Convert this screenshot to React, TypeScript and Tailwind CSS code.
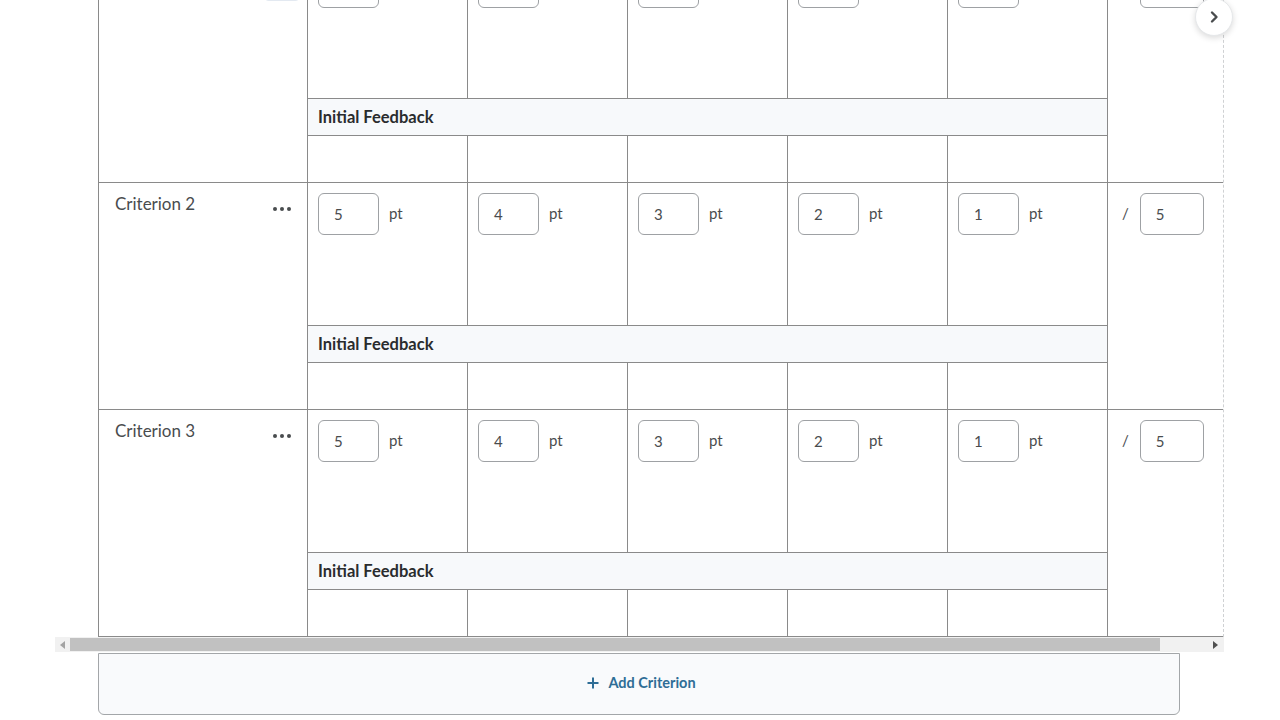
const levels = [5, 4, 3, 2, 1];

const DotsButton = ({ hovered }: { hovered?: boolean }) => (
    <button
        className={`w-[38px] h-[38px] rounded-md flex items-center justify-center gap-[3px] ${
            hovered ? "bg-[#e3e9f1]" : ""
        }`}
    >
        <span className="w-[4px] h-[4px] rounded-full bg-[#494c4e]"></span>
        <span className="w-[4px] h-[4px] rounded-full bg-[#494c4e]"></span>
        <span className="w-[4px] h-[4px] rounded-full bg-[#494c4e]"></span>
    </button>
);

const PointInput = ({ value, wide }: { value: number; wide?: boolean }) => (
    <div
        className={`${
            wide ? "w-[64px]" : "w-[61px]"
        } h-[42px] rounded-[6px] border border-[#9ea1a4] flex items-center pl-[15px] text-[15px] leading-[20px] pb-[1px] text-[#494c4e]`}
    >
        {value}
    </div>
);

const CriterionRow = ({
    name,
    hovered,
}: {
    name: string;
    hovered?: boolean;
}) => {
    return (
        <div className="grid grid-cols-[210px_160px_160px_160px_160px_160px_115px] grid-rows-[143px_37px_47px]">
            <div className="row-span-3 border-l border-r border-b border-[#8a8a8a] flex justify-between items-start pl-[16px] pr-[6px] pt-[7px]">
                <span className="text-[17px] leading-[24px] mt-[2px] text-[#494c4e]">
                    {name}
                </span>
                <DotsButton hovered={hovered} />
            </div>

            {levels.map((lv) => (
                <div
                    key={lv}
                    className="border-r border-b border-[#8a8a8a] pl-[10px] pt-[10px]"
                >
                    <div className="flex items-center gap-[10px]">
                        <PointInput value={lv} />
                        <span className="text-[15px] leading-[20px] pb-[2px] text-[#494c4e]">
                            pt
                        </span>
                    </div>
                </div>
            ))}

            <div className="row-span-3 border-b border-[#8a8a8a] pl-[14px] pt-[10px]">
                <div className="flex items-center gap-[11px]">
                    <span className="text-[15px] leading-[20px] pb-[2px] text-[#494c4e]">
                        /
                    </span>
                    <PointInput value={5} wide />
                </div>
            </div>

            <div className="col-span-5 border-r border-b border-[#8a8a8a] bg-[#f7f9fb] flex items-center pl-[10px]">
                <span className="text-[16.5px] leading-[20px] font-bold text-[#2a2c2e]">
                    Initial Feedback
                </span>
            </div>

            {levels.map((lv) => (
                <div
                    key={"f" + lv}
                    className="border-r border-b border-[#8a8a8a]"
                ></div>
            ))}
        </div>
    );
};

export default function App() {
    return (
        <div className="w-[1280px] h-[720px] bg-white overflow-hidden font-['Lato','Noto_Sans',sans-serif]">
            <div className="ml-[55px] w-[1169px] relative">
                <div className="h-[637px] overflow-hidden pl-[43px] border-r border-dashed border-[#cfd1d3]">
                    <div className="-mt-[44px]">
                        <CriterionRow name="Criterion 1" hovered />
                        <CriterionRow name="Criterion 2" />
                        <CriterionRow name="Criterion 3" />
                    </div>
                </div>

                <button className="absolute left-[1140px] top-[-2px] w-[38px] h-[38px] rounded-full bg-white border border-[#e6e8ea] shadow-[0_2px_6px_rgba(0,0,0,0.15)] flex items-center justify-center">
                    <svg width="14" height="14" viewBox="0 0 14 14">
                        <path
                            d="M5 2.5 L9.5 7 L5 11.5"
                            fill="none"
                            stroke="#494c4e"
                            strokeWidth="2.4"
                            strokeLinecap="round"
                            strokeLinejoin="round"
                        />
                    </svg>
                </button>

                <div className="h-[15px] flex items-center bg-[#f1f1f1]">
                    <div className="w-[15px] h-[15px] flex items-center justify-center">
                        <svg width="6" height="8" viewBox="0 0 6 8">
                            <path d="M5 0 L0 4 L5 8 Z" fill="#a3a3a3" />
                        </svg>
                    </div>
                    <div className="w-[1090px] h-[13px] bg-[#c1c1c1]"></div>
                    <div className="flex-1"></div>
                    <div className="w-[18px] h-[15px] flex items-center justify-center">
                        <svg width="6" height="8" viewBox="0 0 6 8">
                            <path d="M1 0 L6 4 L1 8 Z" fill="#505050" />
                        </svg>
                    </div>
                </div>
            </div>

            <button className="ml-[98px] mt-[1px] w-[1082px] h-[62px] bg-[#f9fafc] border border-[#a3a6a9] rounded-b-[6px] flex items-center justify-center gap-[9px] pb-[3px] pl-[5px] text-[#2f6d96]">
                <svg width="12" height="12" viewBox="0 0 12 12">
                    <path
                        d="M6 0.5 V11.5 M0.5 6 H11.5"
                        stroke="#2f6d96"
                        strokeWidth="2"
                    />
                </svg>
                <span className="text-[14.5px] font-bold">Add Criterion</span>
            </button>
        </div>
    );
}
